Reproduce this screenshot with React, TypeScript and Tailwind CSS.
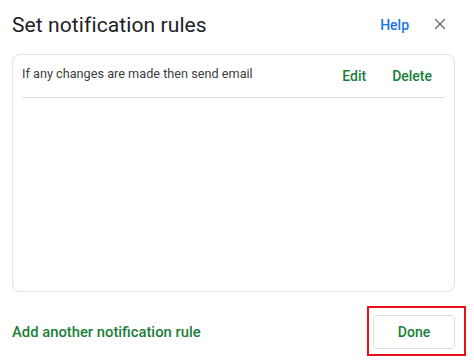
import { X } from "lucide-react";

export default function App() {
  return (
    <div className="w-[474px] h-[363px] bg-white pl-3 pr-[19px] font-['Roboto',_'Liberation_Sans',_sans-serif] text-[#202124]">
      {/* Header */}
      <div className="h-12 flex items-center">
        <h2 className="text-[21px] leading-7 pt-[2px] tracking-[0.1px] text-[#202124]">Set notification rules</h2>
        <a className="ml-auto text-sm font-medium text-[#1a73e8] mt-[2px]">Help</a>
        <button className="ml-[22px] mr-[6px] text-[#5f6368]" aria-label="Close">
          <X className="h-[18px] w-[18px]" strokeWidth={1.6} />
        </button>
      </div>

      {/* Rules list */}
      <div className="mt-[6px] h-[238px] rounded-lg border border-[#e0e2e5]">
        <div className="mx-[9px] h-[43px] flex items-start pt-[10px] border-b border-[#dadce0]">
          <span className="text-[12.7px] leading-[18px] text-[#3c4043]">If any changes are made then send email</span>
          <span className="ml-auto mt-[1px] text-sm font-medium text-[#188038]">Edit</span>
          <span className="ml-[26px] mr-[13px] mt-[1px] text-sm font-medium text-[#188038]">Delete</span>
        </div>
      </div>

      {/* Footer */}
      <div className="mt-[23px] flex items-center">
        <span className="text-[14.8px] font-medium text-[#188038]">Add another notification rule</span>
        <div className="ml-auto relative">
          <button className="w-[82px] h-[34px] rounded border border-[#dadce0] text-sm font-medium text-[#188038]">
            Done
          </button>
          <div className="absolute -left-[6px] -top-[9px] w-[99px] h-[50px] border-2 border-[#e5121c] pointer-events-none" />
        </div>
      </div>
    </div>
  );
}
